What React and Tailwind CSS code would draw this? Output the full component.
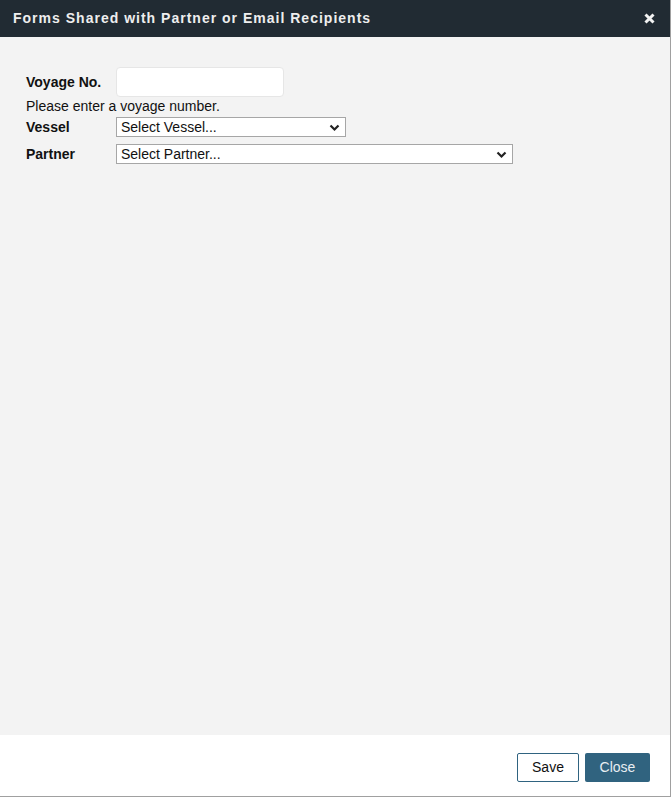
import React from "react"

const Chevron = () => (
  <svg
    className="pointer-events-none absolute right-[6px] top-1/2 -translate-y-1/2"
    width="11"
    height="8"
    viewBox="0 0 11 8"
  >
    <path d="M1.5 1.5 L5.5 5.5 L9.5 1.5" fill="none" stroke="#222" strokeWidth="2.2" />
  </svg>
)

const Select = ({ width, placeholder }) => (
  <div className={`relative ${width}`}>
    <select className="w-full h-[20px] appearance-none border border-[#a6a6a6] bg-white pl-[4px] text-[14px] leading-[18px] text-[#111] outline-none">
      <option>{placeholder}</option>
    </select>
    <Chevron />
  </div>
)

const App = () => {
  return (
    <div className="w-[671px] h-[797px] flex flex-col border-r border-b border-[#a0a0a0] font-['Liberation_Sans',Arial,sans-serif] text-[14px] text-[#111]">
      <header className="h-[37px] shrink-0 flex items-center justify-between bg-[#212b33] pl-[13px] pr-[15px]">
        <h1 className="text-[14px] font-bold tracking-[0.072em] text-[#eeeeee]">
          Forms Shared with Partner or Email Recipients
        </h1>
        <svg width="11" height="11" viewBox="0 0 11 11">
          <path d="M1.5 1.5 L9.5 9.5 M9.5 1.5 L1.5 9.5" stroke="#f2f2f2" strokeWidth="3" />
        </svg>
      </header>

      <main className="flex-1 bg-[#f3f3f3] pt-[30px] pl-[26px]">
        <div className="flex items-center">
          <label className="w-[90px] font-bold">Voyage No.</label>
          <input
            type="text"
            className="w-[168px] h-[30px] rounded-[4px] border border-[#e6e6e6] bg-white px-2 outline-none"
          />
        </div>
        <p className="leading-[18px]">Please enter a voyage number.</p>
        <div className="mt-[2px] flex items-center">
          <label className="w-[90px] font-bold">Vessel</label>
          <Select width="w-[230px]" placeholder="Select Vessel..." />
        </div>
        <div className="mt-[6px] flex items-center">
          <label className="w-[90px] font-bold">Partner</label>
          <Select width="w-[397px]" placeholder="Select Partner..." />
        </div>
      </main>

      <footer className="h-[61px] shrink-0 flex items-start justify-end gap-[6px] bg-white pt-[18px] pr-[20px]">
        <button className="h-[29px] w-[62px] rounded-[2px] border border-[#2f6380] bg-white text-[14px] text-[#111]">
          Save
        </button>
        <button className="h-[29px] w-[65px] rounded-[2px] bg-[#30637f] text-[14px] text-[#e8eef2]">
          Close
        </button>
      </footer>
    </div>
  )
}

export default App
